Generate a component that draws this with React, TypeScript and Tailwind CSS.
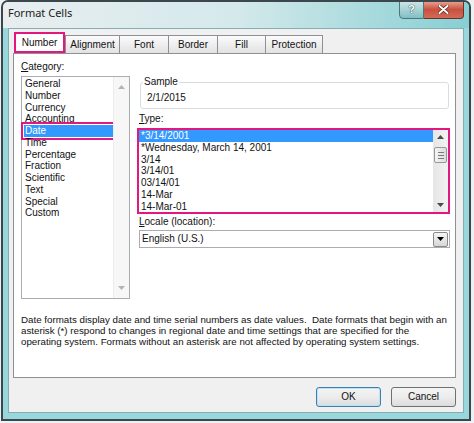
import React from "react";

function UpArrow({ color }: { color: string }) {
  return (
    <svg width="7" height="4" viewBox="0 0 7 4">
      <path d="M0 4 L3.5 0 L7 4 Z" fill={color} />
    </svg>
  );
}
function DownArrow({ color }: { color: string }) {
  return (
    <svg width="7" height="4" viewBox="0 0 7 4">
      <path d="M0 0 L7 0 L3.5 4 Z" fill={color} />
    </svg>
  );
}

export default function App() {
  const categories = [
    "General",
    "Number",
    "Currency",
    "Accounting",
    "Date",
    "Time",
    "Percentage",
    "Fraction",
    "Scientific",
    "Text",
    "Special",
    "Custom",
  ];
  const types = [
    "*3/14/2001",
    "*Wednesday, March 14, 2001",
    "3/14",
    "3/14/01",
    "03/14/01",
    "14-Mar",
    "14-Mar-01",
  ];
  const tabs = [
    { label: "Alignment", w: "w-[55px] border-l" },
    { label: "Font", w: "w-[49px]" },
    { label: "Border", w: "w-[49px]" },
    { label: "Fill", w: "w-[48px]" },
    { label: "Protection", w: "w-[57px]" },
  ];
  return (
    <div className="w-[474px] h-[423px] bg-[#eef1f1] overflow-hidden font-['Liberation_Sans',Arial,sans-serif] text-[10px] text-[#111]">
      <div className="ml-px w-[470px] h-[421px] border-2 border-[#3b474c] rounded-t-[7px] bg-[#98d7db] flex flex-col overflow-hidden">
        {/* Title bar */}
        <div className="h-[26px] flex justify-between bg-linear-to-r from-[#e9eef0] via-[#d4e9eb] to-[#86cfd3]">
          <div className="pl-[5px] pt-[4px] text-[11px] leading-[14px] text-[#222] font-['Noto_Sans',sans-serif]">
            Format Cells
          </div>
          <div className="mr-[5px] -mt-[2px] flex h-[19px]">
            <div className="w-[25px] h-full rounded-bl-[4px] border border-[#50767b] bg-linear-to-b from-[#cfe6e8] via-[#a9d3d6] to-[#7fbfc3] flex items-center justify-center">
              <span className="text-[11px] font-bold leading-none text-white [text-shadow:0_0_1px_#2a4a50,0_0_1px_#2a4a50]">
                ?
              </span>
            </div>
            <div className="w-[40px] h-full rounded-br-[4px] border border-l-0 border-[#6a3229] bg-linear-to-b from-[#e9a698] via-[#c9503f] to-[#d36a58] flex items-center justify-center">
              <svg width="11" height="9" viewBox="0 0 11 9">
                <path d="M1.5 1 L9.5 8 M9.5 1 L1.5 8" stroke="#5a1f17" strokeWidth="3.4" strokeLinecap="round" />
                <path d="M1.5 1 L9.5 8 M9.5 1 L1.5 8" stroke="#ffffff" strokeWidth="2" strokeLinecap="round" />
              </svg>
            </div>
          </div>
        </div>

        {/* Content */}
        <div className="mx-[5px] h-[385px] border border-[#85aeb2] bg-[#f0f0f0] flex flex-col">
          {/* Tabs */}
          <div className="mt-[3px] ml-[5px] h-[21px] flex items-end">
            <div className="w-[51px] h-[21px] border-2 border-[#e3187e] bg-white flex items-center justify-center leading-[12px]">
              Number
            </div>
            {tabs.map((t) => (
              <div
                key={t.label}
                className={`${t.w} h-[18px] border-t border-r border-[#8e9097] bg-linear-to-b from-[#fbfbfb] to-[#e2e2e2] flex items-center justify-center leading-[12px]`}
              >
                {t.label}
              </div>
            ))}
          </div>

          {/* Panel */}
          <div className="ml-[4px] w-[443px] h-[325px] border border-[#8e9097] bg-white flex flex-col">
            <div className="flex">
              {/* Left column */}
              <div className="ml-[7px] pt-[7px] w-[109px] flex flex-col">
                <div className="h-[12px] leading-[12px]">
                  <span className="underline">C</span>ategory:
                </div>
                <div className="mt-[3px] h-[223px] border border-[#abadb3] flex">
                  <div className="flex-1 pl-[2px] pt-px flex flex-col">
                    {categories.map((c) =>
                      c === "Date" ? (
                        <div
                          key={c}
                          className="h-[11.75px] leading-[11.75px] px-px bg-[#3399ff] text-white outline-2 outline-[#e3187e] outline-offset-[1px]"
                        >
                          {c}
                        </div>
                      ) : (
                        <div key={c} className="h-[11.75px] leading-[11.75px] px-px">
                          {c}
                        </div>
                      )
                    )}
                  </div>
                  <div className="w-[16px] bg-[#f7f7f7] border-l border-[#ececec] flex flex-col items-center justify-between pt-[8px] pb-[8px]">
                    <UpArrow color="#b4b4b4" />
                    <DownArrow color="#b4b4b4" />
                  </div>
                </div>
              </div>

              {/* Right column */}
              <div className="ml-[8px] w-[312px] flex flex-col">
                <fieldset className="mt-[22px] ml-[2px] w-[309px] border border-[#d6dee3] rounded-[3px]">
                  <legend className="ml-[2px] px-px h-[12px] leading-[12px]">Sample</legend>
                  <div className="h-[20px] pt-[4px] pl-[6px] leading-[12px]">2/1/2015</div>
                </fieldset>
                <div className="mt-[4px] ml-px h-[12px] leading-[12px]">
                  <span className="underline">T</span>ype:
                </div>
                <div className="mt-[3px] -ml-px w-[313px] h-[86px] border-2 border-[#e3187e] flex">
                  <div className="flex-1 flex flex-col">
                    {types.map((t, i) => (
                      <div
                        key={t}
                        className={
                          i === 0
                            ? "h-[11.75px] leading-[11.75px] pl-[2px] bg-[#3399ff] text-white"
                            : "h-[11.75px] leading-[11.75px] pl-[2px]"
                        }
                      >
                        {t}
                      </div>
                    ))}
                  </div>
                  <div className="w-[15px] bg-linear-to-r from-[#e6e6e6] to-[#f2f2f2] flex flex-col items-center">
                    <div className="h-[14px] flex items-center justify-center">
                      <UpArrow color="#4a4a4a" />
                    </div>
                    <div className="mt-[3px] w-[13px] h-[16px] rounded-[2px] border border-[#979797] bg-linear-to-r from-[#f4f4f4] to-[#dcdcdc] flex flex-col items-center justify-center gap-[2px]">
                      <div className="w-[6px] h-px bg-[#7a7a7a]" />
                      <div className="w-[6px] h-px bg-[#7a7a7a]" />
                      <div className="w-[6px] h-px bg-[#7a7a7a]" />
                    </div>
                    <div className="flex-1" />
                    <div className="h-[14px] flex items-center justify-center">
                      <DownArrow color="#4a4a4a" />
                    </div>
                  </div>
                </div>
                <div className="mt-[2px] ml-px h-[12px] leading-[12px]">
                  <span className="underline">L</span>ocale (location):
                </div>
                <div className="mt-[2px] ml-px w-[311px] h-[18px] border border-[#abadb3] flex items-center justify-between">
                  <div className="pl-[2px] leading-[12px]">English (U.S.)</div>
                  <div className="mr-px w-[15px] h-[15px] border border-[#8a8a8a] rounded-[2px] bg-linear-to-b from-[#f6f6f6] to-[#d6d6d6] flex items-center justify-center">
                    <DownArrow color="#000000" />
                  </div>
                </div>
              </div>
            </div>

            {/* Description */}
            <div className="mt-[16px] ml-[7px] text-[9.75px] leading-[10.8px] whitespace-pre">
              <div>Date formats display date and time serial numbers as date values.  Date formats that begin with an</div>
              <div>asterisk (*) respond to changes in regional date and time settings that are specified for the</div>
              <div>operating system. Formats without an asterisk are not affected by operating system settings.</div>
            </div>
          </div>

          {/* Buttons */}
          <div className="mt-[9px] pr-[7px] flex justify-end gap-[10px]">
            <div className="w-[65px] h-[20px] rounded-[3px] border border-[#3c7fb1] shadow-[inset_0_0_0_1px_#b9e4f6] bg-linear-to-b from-[#f4f4f4] via-[#ececec] to-[#dcdcdc] flex items-center justify-center leading-[12px]">
              OK
            </div>
            <div className="w-[65px] h-[20px] rounded-[3px] border border-[#707070] bg-linear-to-b from-[#f4f4f4] via-[#ececec] to-[#dcdcdc] flex items-center justify-center leading-[12px]">
              Cancel
            </div>
          </div>
        </div>
      </div>
    </div>
  );
}
